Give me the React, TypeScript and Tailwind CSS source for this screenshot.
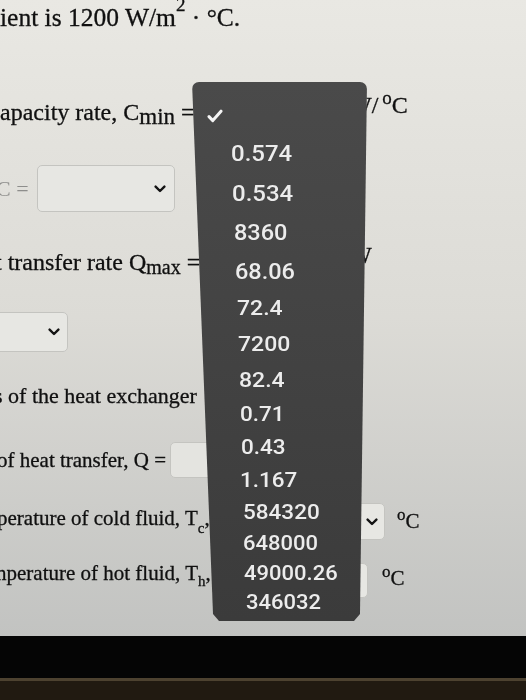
import React from "react";

const serif = "font-['Liberation_Serif','Times_New_Roman',serif]";

// each option carries its own height / indent / size, the photo is taken at an angle
const options = [
  { value: "0.574", row: "h-[39px] leading-[39px] pl-[39px] text-[24px]" },
  { value: "0.534", row: "h-[40px] leading-[40px] pl-[40px] text-[24px]" },
  { value: "8360", row: "h-[39px] leading-[39px] pl-[42px] text-[23.5px]" },
  { value: "68.06", row: "h-[38px] leading-[38px] pl-[43px] text-[23.5px]" },
  { value: "72.4", row: "h-[36px] leading-[36px] pl-[45px] text-[23px]" },
  { value: "7200", row: "h-[36px] leading-[36px] pl-[46px] text-[23px]" },
  { value: "82.4", row: "h-[35px] leading-[35px] pl-[47px] text-[23px]" },
  { value: "0.71", row: "h-[33px] leading-[33px] pl-[48px] text-[22.5px]" },
  { value: "0.43", row: "h-[33px] leading-[33px] pl-[49px] text-[22.5px]" },
  { value: "1.167", row: "h-[32px] leading-[32px] pl-[48px] text-[22.5px]" },
  { value: "584320", row: "h-[32px] leading-[32px] pl-[51px] text-[22.5px]" },
  { value: "648000", row: "h-[31px] leading-[31px] pl-[51px] text-[22px]" },
  { value: "49000.26", row: "h-[30px] leading-[30px] pl-[52px] text-[22px]" },
  { value: "346032", row: "h-[28px] leading-[28px] pl-[54px] text-[22px]" },
];

function Chevron() {
  return (
    <svg width="12" height="8" viewBox="0 0 12 8" fill="none">
      <path
        d="M1.6 1.6 6 6l4.4-4.4"
        stroke="#141414"
        strokeWidth="2.4"
        strokeLinecap="round"
        strokeLinejoin="round"
      />
    </svg>
  );
}

function SelectBox({ className }: { className: string }) {
  return (
    <div
      className={`flex shrink-0 items-center justify-end rounded-[5px] border border-[#c4c4c0] bg-[#e7e7e3] ${className}`}
    >
      <Chevron />
    </div>
  );
}

function Degree() {
  return <span className="relative -top-[8px] ml-[2px] text-[17px]">o</span>;
}

function OptionsMenu() {
  return (
    <div className="absolute left-[192px] top-[82px] h-[539px] w-[175px] rounded-[7px] bg-linear-to-b from-[#4a4a4a] to-[#3b3b3b] pt-[15px] font-['Roboto','Liberation_Sans',sans-serif] font-medium text-[#ececec] [clip-path:polygon(0_0,100%_0,168px_532px,162px_539px,27px_539px,21px_532px)]">
      <div className="flex h-[38px] items-center pl-[15px]">
        <svg width="16" height="14" viewBox="0 0 16 14" fill="none">
          <path
            d="M2 7.6 5.8 11.6 14 2.2"
            stroke="#f4f4f4"
            strokeWidth="3"
            strokeLinecap="round"
            strokeLinejoin="round"
          />
        </svg>
      </div>
      {options.map((o) => (
        <div key={o.value} className={`whitespace-nowrap ${o.row}`}>
          <span className="inline-block scale-y-90">{o.value}</span>
        </div>
      ))}
    </div>
  );
}

export default function App() {
  return (
    <div className="h-[700px] w-[526px] overflow-hidden bg-[#050505]">
      <div className="relative h-[636px] overflow-hidden bg-linear-to-b from-[#e9e8e3] via-[#dcdbd6] to-[#c2c3c1]">
        <div className={`blur-[0.4px] text-[#101010] [-webkit-text-stroke:0.3px_#101010] ${serif}`}>
          {/* header sentence, cut on the left */}
          <div className="pt-[3px]">
            <div className="h-[30px] whitespace-nowrap text-[25.5px] leading-[30px]">
              ient is 1200 W/m
              <span className="relative -top-[15px] text-[19px]">2</span> · °C.
            </div>
          </div>

          {/* Cmin */}
          <div className="mt-[64px] flex h-[30px] items-start">
            <div className="w-[349px] shrink-0 whitespace-nowrap text-[24px] leading-[30px]">
              apacity rate, C
              <span className="relative top-[4px] text-[23px]">min</span> =
            </div>
            <div className="whitespace-nowrap text-[24px] leading-[16px]">
              W/<span className="relative -top-[9px] ml-[4px] text-[19px]">o</span>C
            </div>
          </div>

          {/* C = select */}
          <div className="mt-[38px] flex h-[47px] items-center">
            <span className="-ml-[4px] w-[41px] shrink-0 whitespace-nowrap text-[22px] text-[#8e8e8c] [-webkit-text-stroke:0px]">
              C =
            </span>
            <SelectBox className="h-[47px] w-[138px] pr-[8px]" />
          </div>

          {/* Qmax */}
          <div className="mt-[35px] flex h-[30px] items-start">
            <div className="-ml-[5px] w-[355px] shrink-0 whitespace-nowrap text-[24px] leading-[30px]">
              t transfer rate Q
              <span className="relative top-[4px] text-[20px]">max</span> =
            </div>
            <div className="text-[23px] leading-[18px]">W</div>
          </div>

          <div className="mt-[35px] flex h-[40px]">
            <SelectBox className="-ml-[6px] h-[40px] w-[74px] pr-[7px]" />
          </div>

          <div className="mt-[29px] -ml-[6px] h-[30px] whitespace-nowrap text-[22px] leading-[30px]">
            s of the heat exchanger
          </div>

          {/* Q */}
          <div className="mt-[31px] flex h-[36px] items-center">
            <div className="-ml-[3px] w-[173px] shrink-0 whitespace-nowrap text-[21px] leading-[36px]">
              of heat transfer, Q =
            </div>
            <div className="h-[36px] w-[110px] rounded-[5px] border border-[#c4c4c0] bg-[#e4e4e0]" />
          </div>

          {/* Tc */}
          <div className="mt-[25px] flex h-[37px] items-start">
            <div className="-ml-[3px] w-[215px] shrink-0 whitespace-nowrap text-[21px] leading-[30px]">
              perature of cold fluid, T
              <span className="relative top-[8px] text-[15px]">c</span>,
            </div>
            <SelectBox className="h-[37px] w-[173px] pr-[6px]" />
            <div className="ml-[10px] text-[21px] leading-[36px]">
              <Degree />C
            </div>
          </div>

          {/* Th */}
          <div className="mt-[18px] flex h-[40px] items-start">
            <div className="-ml-[4px] w-[215px] shrink-0 whitespace-nowrap text-[21px] leading-[30px]">
              nperature of hot fluid, T
              <span className="relative top-[6px] text-[15px]">h</span>,
            </div>
            <SelectBox className="mt-[5px] h-[35px] w-[157px] pr-[7px]" />
            <div className="ml-[12px] text-[21px] leading-[40px]">
              <Degree />C
            </div>
          </div>
        </div>

        <OptionsMenu />
      </div>

      {/* phone bezel / desk below the screen */}
      <div className="h-[42px] bg-[#050505]" />
      <div className="h-[3px] bg-[#4d4230]" />
      <div className="h-[19px] bg-[#211a11]" />
    </div>
  );
}
